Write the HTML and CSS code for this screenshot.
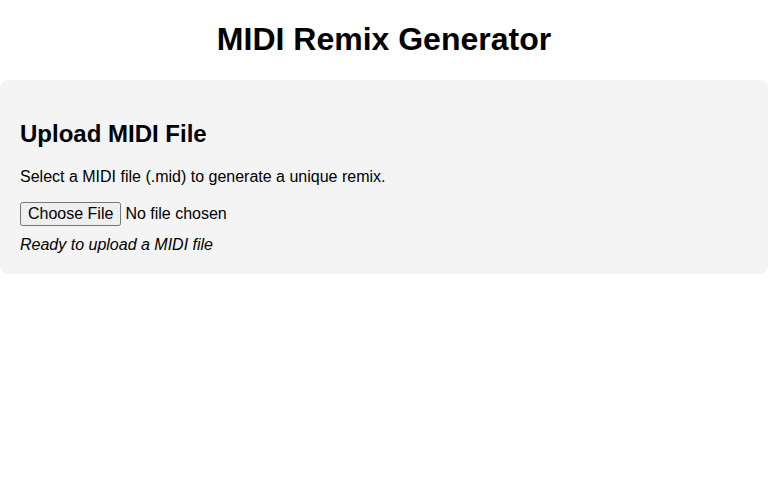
FILE: index.html
```html
<!DOCTYPE html>
<html>
<head>
<meta charset="utf-8">
<link rel="stylesheet" href="styles.css">
</head>
<body>
<h1 class="title">MIDI Remix Generator</h1>
<section class="card">
  <h2 class="card-title">Upload MIDI File</h2>
  <p class="card-text">Select a MIDI file (.mid) to generate a unique remix.</p>
  <input class="file-input" type="file" accept=".mid">
  <div class="status">Ready to upload a MIDI file</div>
</section>
</body>
</html>
```
FILE: styles.css
```css
body {
  margin: 0;
  font-family: "Liberation Sans", Arial, sans-serif;
  color: #000;
  background: #fff;
}
.title {
  font-size: 32px;
  text-align: center;
  margin: 21.44px 0;
}
.card {
  background: #f4f4f4;
  border-radius: 8px;
  padding: 20px;
}
.card-title {
  font-size: 24px;
  margin: 19.92px 0;
}
.card-text {
  font-size: 16px;
  margin: 16px 0;
}
.file-input {
  font-family: "Liberation Sans", Arial, sans-serif;
  font-size: 16px;
}
.status {
  margin-top: 10px;
  font-style: italic;
}
```
